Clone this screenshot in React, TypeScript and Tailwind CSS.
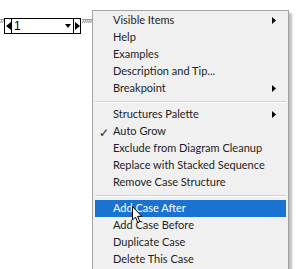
import { ReactNode } from "react";

type Item = { label: string; arrow?: boolean; checked?: boolean; active?: boolean };

const groups: Item[][] = [
    [
        { label: "Visible Items", arrow: true },
        { label: "Help" },
        { label: "Examples" },
        { label: "Description and Tip..." },
        { label: "Breakpoint", arrow: true },
    ],
    [
        { label: "Structures Palette", arrow: true },
        { label: "Auto Grow", checked: true },
        { label: "Exclude from Diagram Cleanup" },
        { label: "Replace with Stacked Sequence" },
        { label: "Remove Case Structure" },
    ],
    [
        { label: "Add Case After", active: true },
        { label: "Add Case Before" },
        { label: "Duplicate Case" },
        { label: "Delete This Case" },
    ],
];

function Hatch({ width }: { width: number }) {
    // the striped wire stub LabVIEW draws on the structure border
    return (
        <svg width={width} height="4" className="block">
            {Array.from({ length: Math.ceil(width / 2) }).map((_, i) => (
                <line
                    key={i}
                    x1={i * 2}
                    y1="4"
                    x2={i * 2 + 3}
                    y2="0"
                    stroke="#8a8a8a"
                    strokeWidth="1"
                />
            ))}
            <line x1="0" y1="0.5" x2={width} y2="0.5" stroke="#9a9a9a" />
        </svg>
    );
}

function CaseSelector() {
    return (
        <div className="flex items-start pt-[18px]">
            <div className="w-[4px] pt-[1px]">
                <Hatch width={4} />
            </div>
            <div className="flex h-[16px] w-[77px] border border-black bg-white">
                <div className="flex w-[7px] items-center justify-center border-r border-black">
                    <svg width="5" height="8">
                        <polygon points="5,0 0,4 5,8" fill="#000" />
                    </svg>
                </div>
                <div className="flex flex-1 items-center pl-[2px] text-[12px] leading-none text-black [font-family:'Liberation_Sans',Arial,sans-serif]">
                    1
                </div>
                <div className="flex w-[8px] items-center">
                    <svg width="6" height="4">
                        <polygon points="0,0 6,0 3,4" fill="#000" />
                    </svg>
                </div>
                <div className="flex w-[7px] items-center justify-center border-l border-black">
                    <svg width="5" height="8">
                        <polygon points="0,0 5,4 0,8" fill="#000" />
                    </svg>
                </div>
            </div>
            <div className="pt-[1px] pl-[1px]">
                <Hatch width={11} />
            </div>
        </div>
    );
}

function MenuRow({ item }: { item: Item }) {
    return (
        <div
            className={`relative flex h-[17px] items-center pl-[18px] pr-[10px] ${
                item.active ? "bg-[#1a73d1] text-white" : "text-[#1e1e1e]"
            }`}
        >
            {item.checked && (
                <span className="absolute left-[4px] top-[1px] text-[12px]">✓</span>
            )}
            <span className="flex-1 whitespace-nowrap">{item.label}</span>
            {item.arrow && (
                <svg width="4" height="7">
                    <polygon points="0,0 4,3.5 0,7" fill="#000" />
                </svg>
            )}
        </div>
    );
}

function Separator() {
    return (
        <div className="flex h-[9px] flex-col justify-center">
            <div className="h-[1px] bg-[#d2d2d2]" />
            <div className="h-[1px] bg-white" />
        </div>
    );
}

function ContextMenu() {
    const rows: ReactNode[] = [];
    groups.forEach((g, gi) => {
        if (gi > 0) rows.push(<Separator key={"s" + gi} />);
        g.forEach((item) => rows.push(<MenuRow key={item.label} item={item} />));
    });
    return (
        <div className="absolute left-[92px] top-[10px] w-[197px] border border-[#a3a3a3] bg-[#f0f0f0] px-[2px] pt-[1px] pb-[20px] text-[11px] [font-family:Lato,'Noto_Sans',sans-serif] shadow-[3px_3px_2px_rgba(0,0,0,0.25)]">
            {rows}
        </div>
    );
}

function Cursor() {
    return (
        <svg
            width="12"
            height="18"
            viewBox="0 0 12 18"
            className="absolute left-[132px] top-[206px]"
        >
            <path
                d="M0.5 0.5 L0.5 14 L3.5 11 L5.8 16.5 L7.8 15.6 L5.6 10.3 L9.8 10.3 Z"
                fill="#fff"
                stroke="#000"
                strokeWidth="1"
            />
        </svg>
    );
}

export default function App() {
    return (
        <div className="relative h-[269px] w-[300px] overflow-hidden bg-white">
            <CaseSelector />
            <ContextMenu />
            <Cursor />
        </div>
    );
}
